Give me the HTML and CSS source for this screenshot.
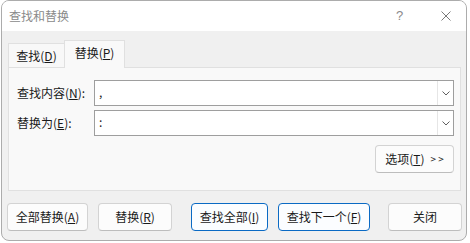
FILE: index.html
```html
<!DOCTYPE html>
<html lang="zh-CN">
<head>
<meta charset="utf-8">
<title>查找和替换</title>
<link rel="stylesheet" href="styles.css">
</head>
<body>
<div class="dialog">
  <div class="titlebar">
    <span class="title">查找和替换</span>
    <span class="help">?</span>
    <span class="close">
      <svg width="10" height="10" viewBox="0 0 10 10"><path d="M0.5 0.5 L9.5 9.5 M9.5 0.5 L0.5 9.5" stroke="#7a7a7a" stroke-width="1" fill="none"/></svg>
    </span>
  </div>
  <div class="content">
    <div class="tabstrip">
      <div class="tab">查找(<u>D</u>)</div>
      <div class="tab active">替换(<u>P</u>)</div>
    </div>
    <div class="panel">
      <div class="row">
        <span class="label">查找内容(<u>N</u>):</span>
        <div class="combo">
          <span class="value">,</span>
          <span class="arrow"><svg width="8" height="5" viewBox="0 0 8 5"><path d="M0.5 0.5 L4 4 L7.5 0.5" stroke="#606060" stroke-width="1" fill="none"/></svg></span>
        </div>
      </div>
      <div class="row">
        <span class="label">替换为(<u>E</u>):</span>
        <div class="combo">
          <span class="value">:</span>
          <span class="arrow"><svg width="8" height="5" viewBox="0 0 8 5"><path d="M0.5 0.5 L4 4 L7.5 0.5" stroke="#606060" stroke-width="1" fill="none"/></svg></span>
        </div>
      </div>
      <div class="options-row">
        <button class="btn options">选项(<u>T</u>) <span class="chev">&gt; &gt;</span></button>
      </div>
    </div>
    <div class="buttons">
      <button class="btn b1">全部替换(<u>A</u>)</button>
      <button class="btn b2">替换(<u>R</u>)</button>
      <button class="btn b3 focus">查找全部(<u>I</u>)</button>
      <button class="btn b4 focus">查找下一个(<u>F</u>)</button>
      <button class="btn b5">关闭</button>
    </div>
  </div>
</div>
</body>
</html>
```

FILE: styles.css
```css
html, body {
  margin: 0;
  padding: 0;
  background: #ffffff;
}
body {
  width: 470px;
  height: 243px;
  overflow: hidden;
  font-family: "Noto Sans CJK SC", "Noto Sans", sans-serif;
  font-size: 12px;
  color: #1a1a1a;
}
u {
  text-decoration: underline;
  text-underline-offset: 1px;
  text-decoration-thickness: 1px;
}
.dialog {
  box-sizing: border-box;
  width: 466px;
  height: 241px;
  margin-left: 1px;
  border: 1px solid #acacac;
  border-radius: 8px;
  background: #f0f0f0;
  overflow: hidden;
}
.titlebar {
  height: 30px;
  background: #ffffff;
  display: flex;
  align-items: center;
  padding-left: 7px;
}
.title {
  color: #8a8a8a;
  font-size: 12px;
  line-height: 14px;
  flex: 1;
}
.help {
  color: #8a8a8a;
  font-family: "Liberation Sans", sans-serif;
  font-size: 13px;
  line-height: 14px;
  width: 8px;
  margin-right: 37px;
}
.close {
  width: 10px;
  height: 10px;
  display: flex;
  margin-right: 15px;
}
.content {
  padding-top: 9px;
}
.tabstrip {
  display: flex;
  align-items: flex-end;
  height: 27px;
  margin-left: 6px;
  width: 453px;
  border-bottom: 1px solid #e0e0e0;
}
.tab {
  box-sizing: border-box;
  height: 24px;
  width: 56px;
  border: 1px solid #e0e0e0;
  border-bottom: none;
  border-right: none;
  background: #f8f8f8;
  display: flex;
  align-items: center;
  justify-content: center;
  line-height: 14px;
  padding-top: 1px;
}
.tab.active {
  width: 61px;
  height: 28px;
  margin-bottom: -1px;
  border-right: 1px solid #e0e0e0;
  background: #f9f9f9;
  padding-top: 0;
  padding-bottom: 3px;
}
.panel {
  box-sizing: border-box;
  width: 453px;
  height: 123px;
  margin-left: 6px;
  border: 1px solid #e0e0e0;
  border-top: none;
  background: #f9f9f9;
  padding: 12px 6px 0 8px;
}
.row {
  display: flex;
  align-items: center;
  height: 26px;
  margin-bottom: 4px;
}
.label {
  width: 77px;
  line-height: 14px;
}
.combo {
  box-sizing: border-box;
  width: 360px;
  height: 26px;
  border: 1px solid #9e9e9e;
  background: #ffffff;
  display: flex;
}
.value {
  flex: 1;
  padding-left: 4px;
  display: flex;
  align-items: center;
  line-height: 14px;
  padding-bottom: 2px;
}
.arrow {
  width: 15px;
  border-left: 1px solid #e6e6e6;
  display: flex;
  align-items: center;
  justify-content: center;
  padding-top: 1px;
}
.options-row {
  display: flex;
  justify-content: flex-end;
  margin-top: 9px;
}
.btn {
  box-sizing: border-box;
  height: 28px;
  border: 1px solid #d3d3d3;
  border-bottom-color: #bdbdbd;
  border-radius: 4px;
  background: #fcfcfc;
  font-family: "Noto Sans CJK SC", "Noto Sans", sans-serif;
  font-size: 12px;
  line-height: 14px;
  color: #1a1a1a;
  padding: 0;
  display: flex;
  align-items: center;
  justify-content: center;
}
.options {
  width: 79px;
}
.chev {
  font-size: 10px;
  margin-left: 6px;
  letter-spacing: 0;
}
.buttons {
  display: flex;
  margin-top: 12px;
  margin-left: 5px;
}
.b1 { width: 81px; }
.b2 { width: 74px; margin-left: 10px; }
.b3 { width: 77px; margin-left: 19px; }
.b4 { width: 92px; margin-left: 10px; }
.b5 { width: 74px; margin-left: 18px; }
.focus {
  border: 1px solid #0a6ac4;
  background: #fbfdff;
}
```
